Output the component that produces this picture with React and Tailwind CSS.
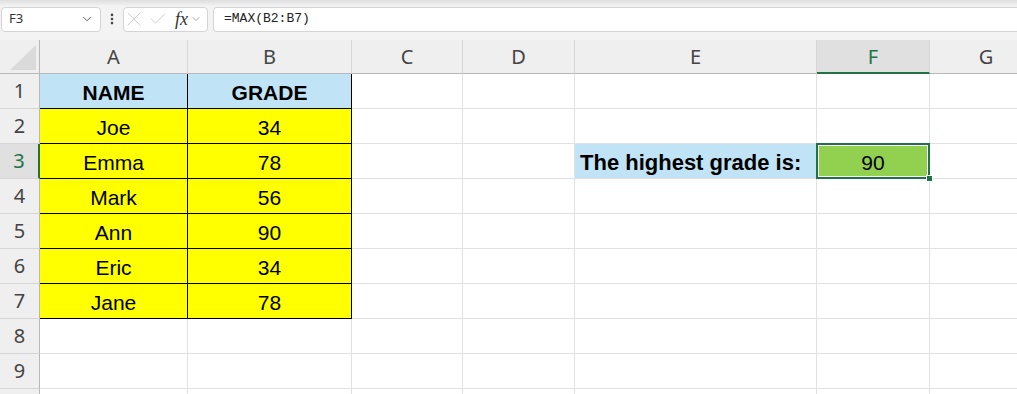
import {ChevronDown, Check, X, EllipsisVertical} from 'lucide-react';

const columns = [
    {key: 'A', width: 148},
    {key: 'B', width: 164},
    {key: 'C', width: 111},
    {key: 'D', width: 112},
    {key: 'E', width: 242},
    {key: 'F', width: 113},
    {key: 'G', width: 113},
];

const tableRows = [
    ['NAME', 'GRADE'],
    ['Joe', '34'],
    ['Emma', '78'],
    ['Mark', '56'],
    ['Ann', '90'],
    ['Eric', '34'],
    ['Jane', '78'],
];

// Formula bar above the sheet
const FormulaBar = () => (
    <div className="h-[40px] bg-[#f3f3f3] flex flex-col">
        <div className="h-[6px] bg-gradient-to-b from-[#dedede] to-[#f3f3f3]"/>
        <div className="flex items-center h-[26px]">
            <div
                className="ml-[1px] w-[100px] h-[25px] bg-white border border-[#d4d4d4] rounded-[4px] flex items-center justify-between pl-[7px] pr-[6px]">
                <span className="text-[13px] text-[#333] font-['Noto_Sans',sans-serif]">F3</span>
                <ChevronDown className="w-[14px] h-[14px] text-[#444]" strokeWidth={1.5}/>
            </div>
            <div className="w-[22px] flex justify-center">
                <EllipsisVertical className="w-[14px] h-[14px] text-[#444]" strokeWidth={2.5}/>
            </div>
            <div
                className="w-[85px] h-[25px] bg-white border border-[#d4d4d4] rounded-[4px] flex items-center">
                <X className="-ml-[2px] w-[24px] h-[24px] text-[#c4c4c4]" strokeWidth={0.8}/>
                <Check className="ml-[2px] w-[20px] h-[20px] text-[#c4c4c4]" strokeWidth={1}/>
                <span
                    className="ml-[7px] italic text-[18px] leading-none text-[#333] font-['Liberation_Serif',serif]">fx</span>
                <ChevronDown className="ml-[2px] w-[12px] h-[12px] text-[#888]" strokeWidth={1.5}/>
            </div>
            <div
                className="ml-[5px] flex-1 h-[25px] bg-white border border-r-0 border-[#d4d4d4] rounded-l-[4px] flex items-center pl-[10px]">
                <span className="text-[13px] text-[#222] font-['Liberation_Mono',monospace]">=MAX(B2:B7)</span>
            </div>
        </div>
    </div>
);

const cellContent = (row, col) => {
    if (row <= 7 && (col === 'A' || col === 'B')) {
        const value = tableRows[row - 1][col === 'A' ? 0 : 1];
        return {value, kind: row === 1 ? 'head' : 'data'};
    }
    if (row === 3 && col === 'E') return {value: 'The highest grade is:', kind: 'label'};
    if (row === 3 && col === 'F') return {value: '90', kind: 'result'};
    return {value: '', kind: 'empty'};
};

const Cell = ({row, col}) => {
    const {value, kind} = cellContent(row, col);

    if (kind === 'head') {
        return (
            <div
                className="h-[35px] bg-[#c0e4f5] border-r border-b border-black text-center font-bold text-[21px] leading-[38px] text-black overflow-hidden">
                {value}
            </div>
        );
    }
    if (kind === 'data') {
        return (
            <div
                className="h-[35px] bg-[#ffff00] border-r border-b border-black text-center text-[21px] leading-[38px] text-black overflow-hidden">
                {value}
            </div>
        );
    }
    if (kind === 'label') {
        return (
            <div
                className="h-[35px] bg-[#c0e4f5] border-r border-b border-[#e1e1e1] pl-[5px] font-bold text-[22px] leading-[38px] text-black whitespace-nowrap overflow-hidden">
                {value}
            </div>
        );
    }
    if (kind === 'result') {
        return (
            <div
                className="relative h-[35px] bg-[#92d050] border-r border-b border-[#e1e1e1] text-center text-[21px] leading-[38px] text-black">
                {value}
                {/* selection frame */}
                <div
                    className="absolute -left-[1px] -top-[1px] -right-[1px] -bottom-[1px] border-2 border-[#217346] pointer-events-none">
                    <div className="absolute inset-0 border border-white"/>
                </div>
                <div
                    className="absolute -right-[4px] -bottom-[4px] w-[7px] h-[7px] bg-[#217346] border border-white"/>
            </div>
        );
    }
    return <div className="h-[35px] border-r border-b border-[#e1e1e1]"/>;
};

export default function App() {
    const rowNumbers = [1, 2, 3, 4, 5, 6, 7, 8, 9, 10];

    return (
        <div
            className="w-[1017px] h-[394px] overflow-hidden bg-white font-['Liberation_Sans',Arial,sans-serif]">
            <FormulaBar/>

            <div
                className="grid grid-cols-[40px_148px_164px_111px_112px_242px_113px_113px] font-['Noto_Sans',sans-serif]">
                {/* Corner */}
                <div className="relative h-[34px] bg-[#efefef] border-r border-b border-[#b8b8b8]">
                    <svg className="absolute left-0 top-0" width="40" height="34">
                        <polygon points="36,5 36,30 10,30" fill="#dadada"/>
                    </svg>
                </div>

                {/* Column headers */}
                {columns.map(({key}) =>
                    key === 'F' ? (
                        <div key={key}
                             className="h-[34px] bg-[#e0e0e0] border-r border-[#d6d6d6] border-b-2 border-b-[#217346] text-center text-[20px] leading-[33px] text-[#217346]">
                            {key}
                        </div>
                    ) : (
                        <div key={key}
                             className="h-[34px] bg-[#efefef] border-r border-[#d6d6d6] border-b border-b-[#b8b8b8] text-center text-[20px] leading-[33px] text-[#444]">
                            {key}
                        </div>
                    )
                )}

                {/* Rows */}
                {rowNumbers.map((row) => (
                    <div key={row} className="contents">
                        {row === 3 ? (
                            <div
                                className="h-[35px] bg-[#e0e0e0] border-b border-[#d6d6d6] border-r-2 border-r-[#217346] text-center text-[20px] leading-[34px] text-[#217346]">
                                {row}
                            </div>
                        ) : (
                            <div
                                className="h-[35px] bg-[#efefef] border-b border-[#d6d6d6] border-r border-r-[#b8b8b8] text-center text-[20px] leading-[34px] text-[#444]">
                                {/* row 10 sits below the fold, only its top edge shows */}
                                {row < 10 ? row : ''}
                            </div>
                        )}
                        {columns.map(({key}) => (
                            <div key={key} className="font-['Liberation_Sans',Arial,sans-serif]">
                                <Cell row={row} col={key}/>
                            </div>
                        ))}
                    </div>
                ))}
            </div>
        </div>
    );
}
